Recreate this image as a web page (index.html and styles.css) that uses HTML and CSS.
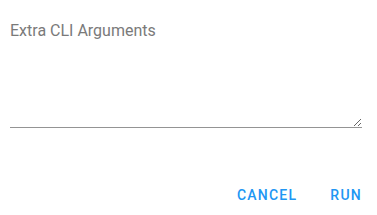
FILE: index.html
```html
<!DOCTYPE html>
<html lang="en">
<head>
  <meta charset="UTF-8">
  <meta name="viewport" content="width=device-width, initial-scale=1.0">
  <title>Extra CLI Arguments</title>
  <link rel="stylesheet" href="styles.css">
</head>
<body>
  <div class="dialog">
    <div class="dialog-content">
      <textarea class="args-input" placeholder="Extra CLI Arguments"></textarea>
    </div>
    <div class="dialog-actions">
      <button class="action-btn">Cancel</button>
      <button class="action-btn">Run</button>
    </div>
  </div>
</body>
</html>
```

FILE: styles.css
```css
body {
  margin: 0;
  background: #fff;
  font-family: Roboto, 'Liberation Sans', sans-serif;
}
.dialog {
  width: 377px;
  height: 215px;
}
.dialog-content {
  padding: 15px 15px 0 10px;
}
.args-input {
  display: block;
  box-sizing: border-box;
  width: 100%;
  height: 113px;
  margin: 0;
  padding: 6px 0 7px;
  border: none;
  border-bottom: 1px solid #949494;
  outline: none;
  font-family: Roboto, 'Liberation Sans', sans-serif;
  font-size: 16px;
  line-height: 19px;
  color: #212121;
  background: transparent;
}
.args-input::placeholder {
  color: #7a7a7a;
  opacity: 1;
}
.dialog-actions {
  display: flex;
  justify-content: flex-end;
  gap: 17px;
  padding: 49px 7px 0 0;
}
.action-btn {
  background: none;
  border: none;
  padding: 6px 8px;
  font-family: Roboto, 'Liberation Sans', sans-serif;
  font-size: 14px;
  font-weight: 500;
  line-height: 24.5px;
  letter-spacing: 1.25px;
  text-transform: uppercase;
  color: #2196f3;
  cursor: pointer;
}
```
